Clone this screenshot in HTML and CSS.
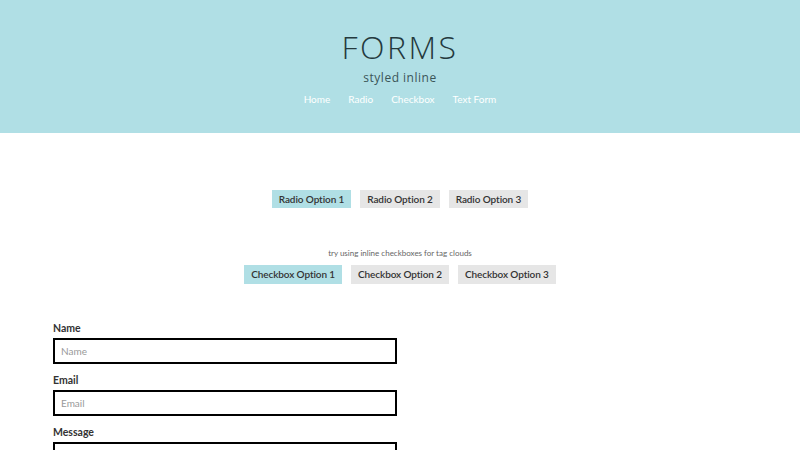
FILE: index.html
```html
<!DOCTYPE html>
<html lang="en">
<head>
    <meta charset="UTF-8">
    <meta name="viewport" content="width=device-width, initial-scale=1.0">
    <title>Forms</title>
    <link rel="stylesheet" href="styles.css">
</head>
<body>
    <!-- Header -->
    <header class="header">
        <h1>FORMS</h1>
        <p class="tagline">styled inline</p>
        <nav class="nav">
            <a href="#">Home</a>
            <a href="#">Radio</a>
            <a href="#">Checkbox</a>
            <a href="#">Text Form</a>
        </nav>
    </header>

    <!-- Radio group -->
    <section class="radio-section">
        <div class="options">
            <label class="option"><input type="radio" name="radio" checked><span>Radio Option 1</span></label>
            <label class="option"><input type="radio" name="radio"><span>Radio Option 2</span></label>
            <label class="option"><input type="radio" name="radio"><span>Radio Option 3</span></label>
        </div>
    </section>

    <!-- Checkbox group -->
    <section class="checkbox-section">
        <p class="hint">try using inline checkboxes for tag clouds</p>
        <div class="options">
            <label class="option"><input type="checkbox" checked><span>Checkbox Option 1</span></label>
            <label class="option"><input type="checkbox"><span>Checkbox Option 2</span></label>
            <label class="option"><input type="checkbox"><span>Checkbox Option 3</span></label>
        </div>
    </section>

    <!-- Text form -->
    <form class="text-form">
        <label for="name">Name</label>
        <input type="text" id="name" placeholder="Name">
        <label for="email">Email</label>
        <input type="text" id="email" placeholder="Email">
        <label for="message">Message</label>
        <textarea id="message" rows="4"></textarea>
    </form>
</body>
</html>
```

FILE: styles.css
```css
body {
    margin: 0;
    padding: 0;
    font-family: Lato, "Open Sans", Arial, sans-serif;
    color: #333;
    background: #fff;
}

/* Header */
.header {
    background-color: #b0dfe5;
    height: 133px;
    box-sizing: border-box;
    padding-top: 29px;
    text-align: center;
}
.header h1 {
    margin: 0;
    font-family: "Open Sans", Arial, sans-serif;
    font-weight: 300;
    font-size: 32px;
    letter-spacing: 2.5px;
    line-height: 36px;
    color: #24393d;
}
.tagline {
    margin: 4px 0 0;
    font-family: "Open Sans", Arial, sans-serif;
    font-size: 12px;
    line-height: 17px;
    letter-spacing: 0.5px;
    color: #3b5558;
}
.nav {
    display: flex;
    justify-content: center;
    gap: 18px;
    margin-top: 7px;
    line-height: 12px;
}
.nav a {
    color: #fff;
    text-decoration: none;
    font-size: 10px;
}

/* Option groups */
.options {
    display: flex;
    justify-content: center;
    gap: 9px;
}
.option input {
    display: none;
}
.option span {
    display: block;
    background-color: #e6e6e6;
    font-size: 10px;
    font-weight: 600;
    letter-spacing: -0.1px;
    line-height: 18px;
    padding: 0 7px;
    color: #333;
    cursor: pointer;
}
.option input:checked + span {
    background-color: #b0dfe5;
}
.radio-section {
    padding-top: 57px;
}
.checkbox-section {
    padding-top: 40px;
}
.checkbox-section .option span {
    line-height: 19px;
}
.hint {
    margin: 0 0 7px;
    text-align: center;
    font-size: 8px;
    color: #666;
}

/* Text form */
.text-form {
    width: 344px;
    margin: 38px 0 0 53px;
}
.text-form label {
    display: block;
    font-size: 10.5px;
    font-weight: bold;
    margin-bottom: 4px;
}
.text-form input, .text-form textarea {
    display: block;
    width: 100%;
    height: 26px;
    box-sizing: border-box;
    border: 2px solid #000;
    padding: 0 6px;
    margin: 0 0 10px;
    font-family: inherit;
    font-size: 10px;
}
.text-form textarea {
    height: 80px;
}
.text-form input::placeholder {
    color: #999;
}
```
